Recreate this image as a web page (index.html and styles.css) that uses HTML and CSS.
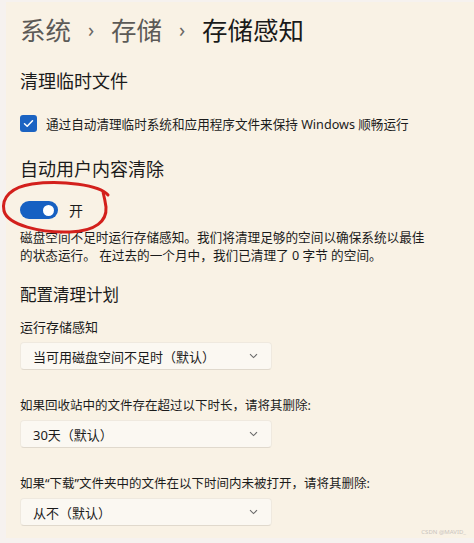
FILE: index.html
```html
<!doctype html>
<html lang="zh-CN">

<head>
    <meta charset="utf-8">
    <meta name="viewport" content="width=device-width, initial-scale=1">
    <title>存储感知</title>

    <link rel="stylesheet" href="styles.css">

</head>

<body>
    <div class="window">
        <div class="crumb">
            <span class="crumb-parent">系统</span>
            <span class="crumb-sep">›</span>
            <span class="crumb-parent">存储</span>
            <span class="crumb-sep">›</span>
            <span class="crumb-current">存储感知</span>
        </div>

        <div class="section-title first">清理临时文件</div>

        <div class="check-row">
            <span class="checkbox">
                <svg width="11" height="9" viewBox="0 0 11 9">
                    <path d="M1.5 4.8 L4.2 7.3 L9.5 1.7" fill="none" stroke="#fff" stroke-width="1.5" stroke-linecap="round" stroke-linejoin="round" />
                </svg>
            </span>
            <span>通过自动清理临时系统和应用程序文件来保持 Windows 顺畅运行</span>
        </div>

        <div class="section-title second">自动用户内容清除</div>

        <div class="toggle-row">
            <span class="toggle"><span class="knob"></span></span>
            <span>开</span>
        </div>

        <p class="desc">磁盘空间不足时运行存储感知。我们将清理足够的空间以确保系统以最佳的状态运行。 在过去的一个月中，我们已清理了 0 字节 的空间。</p>

        <div class="sub-title">配置清理计划</div>

        <div class="label first-label">运行存储感知</div>
        <div class="select">
            <span>当可用磁盘空间不足时（默认）</span>
            <svg class="chevron" width="9" height="6" viewBox="0 0 9 6">
                <path d="M1 1.2 L4.5 4.6 L8 1.2" fill="none" stroke="#6b6b6b" stroke-width="1.1" />
            </svg>
        </div>

        <div class="label">如果回收站中的文件存在超过以下时长，请将其删除:</div>
        <div class="select">
            <span>30天（默认）</span>
            <svg class="chevron" width="9" height="6" viewBox="0 0 9 6">
                <path d="M1 1.2 L4.5 4.6 L8 1.2" fill="none" stroke="#6b6b6b" stroke-width="1.1" />
            </svg>
        </div>

        <div class="label">如果“下载”文件夹中的文件在以下时间内未被打开，请将其删除:</div>
        <div class="select">
            <span>从不（默认）</span>
            <svg class="chevron" width="9" height="6" viewBox="0 0 9 6">
                <path d="M1 1.2 L4.5 4.6 L8 1.2" fill="none" stroke="#6b6b6b" stroke-width="1.1" />
            </svg>
        </div>

        <div class="watermark">CSDN @MAVID_</div>
    </div>

    <!-- red marker circle drawn over the toggle -->
    <svg class="marker" width="130" height="245" viewBox="0 0 130 245">
        <path d="M108 195 C 100 185, 62 180, 32 184 C 12 187, 1 197, 4 211 C 8 225, 40 233, 70 232 C 96 231, 107 221, 106 207 C 105 200, 104 196, 103 192"
            fill="none" stroke="#d3201c" stroke-width="3" stroke-linecap="round" />
    </svg>
</body>

</html>
```

FILE: styles.css
```css
body {
    margin: 0;
    background-color: #f6f2ef;
    color: #1b1b1b;
    font-family: "Noto Sans", "Noto Sans CJK SC", sans-serif;
}

.window {
    position: relative;
    margin: 2px 0 0 6px;
    height: 536px;
    padding: 10px 0 0 14px;
    box-sizing: border-box;
    background-color: #f9f2e5;
}

.crumb {
    display: flex;
    align-items: center;
    height: 36px;
    font-size: 25.5px;
    line-height: 36px;
}

.crumb-parent {
    color: #5c5a57;
}

.crumb-sep {
    color: #6a6764;
    font-size: 20px;
    width: 40px;
    text-align: center;
}

.crumb-current {
    color: #1a1a1a;
}

.section-title {
    font-size: 18px;
    line-height: 26px;
}

.section-title.first {
    margin-top: 20px;
}

.section-title.second {
    margin-top: 24px;
}

.check-row {
    display: flex;
    align-items: center;
    gap: 9px;
    margin-top: 20px;
    height: 18px;
    font-size: 12.6px;
}

.checkbox {
    display: flex;
    align-items: center;
    justify-content: center;
    width: 17px;
    height: 17px;
    border-radius: 3px;
    background-color: #1b63c2;
}

.toggle-row {
    display: flex;
    align-items: center;
    gap: 11px;
    margin-top: 18px;
    height: 20px;
    font-size: 14px;
}

.toggle {
    display: flex;
    align-items: center;
    justify-content: flex-end;
    width: 38px;
    height: 18px;
    padding: 0 4px;
    box-sizing: border-box;
    border-radius: 9px;
    background-color: #1660c2;
}

.knob {
    width: 11px;
    height: 11px;
    border-radius: 50%;
    background-color: #fff;
}

.desc {
    margin: 8px 0 0 0;
    width: 412px;
    font-size: 12.65px;
    line-height: 18px;
}

.sub-title {
    margin-top: 19px;
    font-size: 16.5px;
    line-height: 24px;
}

.label {
    margin-top: 27px;
    font-size: 12.5px;
    line-height: 18px;
}

.label.first-label {
    margin-top: 11px;
    font-size: 13px;
}

.select {
    display: flex;
    align-items: center;
    justify-content: space-between;
    margin-top: 5px;
    width: 252px;
    height: 28px;
    padding: 0 13px 0 12px;
    box-sizing: border-box;
    border: 1px solid #efe9df;
    border-bottom-color: #e0d9cd;
    border-radius: 4px;
    background-color: #fbf8f2;
    font-size: 13px;
}

.first-label + .select {
    margin-top: 6px;
}

.watermark {
    position: absolute;
    right: 8px;
    bottom: 2px;
    font-size: 6px;
    color: #c9c4bd;
}

.marker {
    position: absolute;
    top: 0;
    left: 0;
}
```
